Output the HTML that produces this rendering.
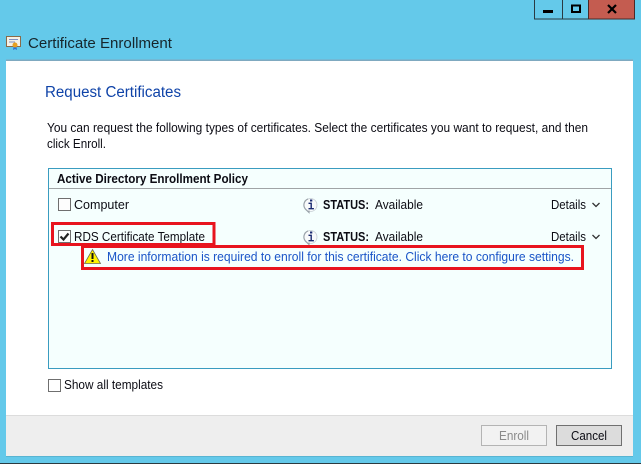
<!DOCTYPE html>
<html><head><meta charset="utf-8"><style>
html,body{margin:0;padding:0;width:641px;height:464px;overflow:hidden;background:#64c9ea}
svg{display:block;position:absolute;left:0;top:0}
text{font-family:"Liberation Sans",sans-serif;font-size:12.5px;fill:#0c0c14}
</style></head><body>
<svg width="641" height="464" viewBox="0 0 641 464" xmlns="http://www.w3.org/2000/svg">
<rect width="641" height="464" fill="#64c9ea"/>
<rect x="0" y="463" width="641" height="1" fill="#2b3a40"/>

<!-- window buttons -->
<rect x="534.500" y="-1" width="28" height="20" fill="#64c9ea" stroke="#2a3a42"/>
<rect x="562.500" y="-1" width="26" height="20" fill="#64c9ea" stroke="#2a3a42"/>
<rect x="588.500" y="-1" width="46" height="20" fill="#c45c50" stroke="#4a2a28"/>
<rect x="543" y="10" width="10" height="3" fill="#000"/>
<rect x="572" y="5.500" width="8" height="6.500" fill="none" stroke="#000" stroke-width="2"/>
<path d="M608 5l8 8M616 5l-8 8" stroke="#000" stroke-width="2.200" fill="none"/>

<!-- title icon -->
<rect x="6.500" y="36.500" width="14" height="10" fill="#f6f1e6" stroke="#8a6a48"/>
<path d="M9 39.500h9M9 42h6" stroke="#8090c0" stroke-width="1"/>
<path d="M13.500 47l-.5 3 2-1 2 1-.5-3" fill="#2f6fd0"/>
<circle cx="15" cy="45" r="2.500" fill="#e8a020"/>
<text x="28" y="48" textLength="144" lengthAdjust="spacingAndGlyphs" style="font-size:15px;fill:#16262c">Certificate Enrollment</text>

<!-- main panel -->
<rect x="6" y="60" width="627" height="396" fill="#fff"/>
<rect x="6" y="59.500" width="627" height="1.500" fill="#7fa9c0"/>
<rect x="6" y="415" width="627" height="41" fill="#eeeeee"/>
<rect x="6" y="415" width="627" height="1" fill="#dcdcdc"/>
<rect x="6" y="456" width="627" height="1" fill="#58b4d2"/>

<text x="45" y="97" textLength="136" lengthAdjust="spacingAndGlyphs" style="font-size:15.500px;fill:#0f43a8">Request Certificates</text>
<text x="47" y="132" textLength="541" lengthAdjust="spacingAndGlyphs">You can request the following types of certificates. Select the certificates you want to request, and then</text>
<text x="47" y="148" textLength="59" lengthAdjust="spacingAndGlyphs">click Enroll.</text>

<!-- policy box -->
<rect x="48.500" y="168.500" width="563" height="200" fill="#f5fffe" stroke="#3a9cc0"/>
<rect x="49" y="188" width="562" height="1" fill="#a0a4a6"/>
<text x="57" y="183" textLength="191" lengthAdjust="spacingAndGlyphs" style="font-weight:bold">Active Directory Enrollment Policy</text>

<!-- row 1 -->
<rect x="58.500" y="198.500" width="12" height="12" fill="#fdfdfd" stroke="#6f6f6f"/>
<text x="74" y="209" textLength="55" lengthAdjust="spacingAndGlyphs">Computer</text>
<g id="i1">
<circle cx="310.500" cy="205" r="6.500" fill="#f8fafb" stroke="#c6ced4" stroke-width=".8"/>
<path d="M308 198.900a6.500 6.500 0 0 0-2.500 10.300l3.500 3.300v-2" fill="none" stroke="#9aa3aa" stroke-width="1.200"/>
<rect x="310" y="199.500" width="2.300" height="2" fill="#1a2a70"/>
<path d="M308.500 203.300h2.700v4.900M308.500 208.700h5.400" fill="none" stroke="#1a2a70" stroke-width="1.400"/>
</g>
<text x="323" y="209" textLength="46" lengthAdjust="spacingAndGlyphs" style="font-weight:bold">STATUS:</text>
<text x="375" y="209" textLength="48" lengthAdjust="spacingAndGlyphs">Available</text>
<text x="551" y="209" textLength="35" lengthAdjust="spacingAndGlyphs">Details</text>
<path d="M592.500 203l3.500 3.500 3.500-3.500" fill="none" stroke="#333" stroke-width="1.300"/>

<!-- row 2 -->
<rect x="58.500" y="230.500" width="12" height="12" fill="#fdfdfd" stroke="#6f6f6f"/>
<path d="M60.500 236.500l3 3 5-6" fill="none" stroke="#222" stroke-width="2.200"/>
<text x="74" y="241" textLength="131" lengthAdjust="spacingAndGlyphs">RDS Certificate Template</text>
<use href="#i1" y="32"/>
<text x="323" y="241" textLength="46" lengthAdjust="spacingAndGlyphs" style="font-weight:bold">STATUS:</text>
<text x="375" y="241" textLength="48" lengthAdjust="spacingAndGlyphs">Available</text>
<text x="551" y="241" textLength="35" lengthAdjust="spacingAndGlyphs">Details</text>
<path d="M592.500 235l3.500 3.500 3.500-3.500" fill="none" stroke="#333" stroke-width="1.300"/>

<!-- warning -->
<path d="M92.500 249.500l8 14h-16z" fill="#fff200" stroke="#6a6a50" stroke-width=".8"/>
<rect x="91.500" y="253" width="2" height="6" fill="#111"/>
<rect x="91.500" y="260" width="2" height="2" fill="#111"/>
<text x="107" y="261" textLength="467" lengthAdjust="spacingAndGlyphs" style="fill:#1a55c8">More information is required to enroll for this certificate. Click here to configure settings.</text>

<!-- red highlights -->
<rect x="52.500" y="223.500" width="161.500" height="21" fill="none" stroke="#e8141e" stroke-width="3"/>
<rect x="82.500" y="246.500" width="500" height="22" fill="none" stroke="#e8141e" stroke-width="3"/>

<!-- show all -->
<rect x="48.500" y="379.500" width="12" height="12" fill="#fff" stroke="#6f6f6f"/>
<text x="64" y="389" textLength="99" lengthAdjust="spacingAndGlyphs">Show all templates</text>

<!-- buttons -->
<rect x="481.500" y="425.500" width="65" height="20" fill="#f2f2f2" stroke="#b4b4b4"/>
<text x="499" y="440" textLength="30" lengthAdjust="spacingAndGlyphs" style="fill:#8a8a8a">Enroll</text>
<rect x="556.500" y="425.500" width="65" height="20" fill="#dcdcdc" stroke="#707070"/>
<text x="571" y="440" textLength="36" lengthAdjust="spacingAndGlyphs">Cancel</text>
</svg>
</body></html>
